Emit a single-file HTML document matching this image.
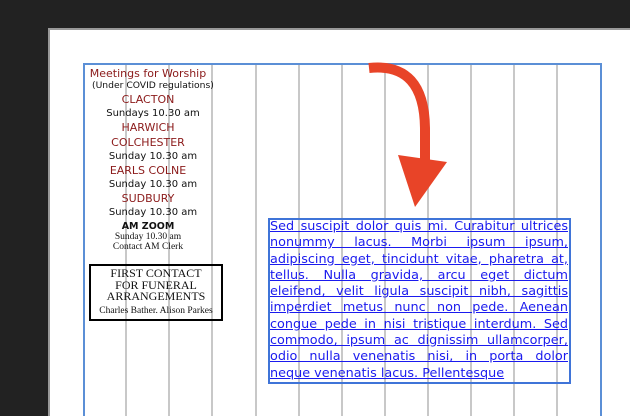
<!DOCTYPE html>
<html><head><style>
html,body{margin:0;width:630px;height:416px;overflow:hidden}
body{background:#222;position:relative;font-family:"DejaVu Sans",sans-serif}
.page{position:absolute;left:48px;top:28px;width:580px;height:386px;background:#fff;border-left:2px solid #999;border-top:2px solid #999;border-right:2px solid #fff}
.frame{position:absolute;left:83px;top:63px;width:515px;height:353px;border:2px solid #5b8fd6;border-bottom:none}
.vl{position:absolute;top:65px;height:351px;width:2px;background:#c8c8c8}
.t{position:absolute;left:88px;width:120px;text-align:center;white-space:nowrap;line-height:12px}
.r{color:#8b1a1a;font-size:11px}
.k{color:#111;font-size:10px}
.s{font-family:"Liberation Serif",serif;font-size:9.5px;color:#111}
.box{position:absolute;left:89px;top:264px;width:130px;height:53px;border:2px solid #000;font-family:"Liberation Serif",serif;text-align:center;font-size:12px;line-height:11.5px;color:#111}
.tb{position:absolute;left:268px;top:218px;width:299px;height:162px;border:2px solid #3f74d8}
.tx{position:absolute;left:270px;top:219px;width:298px;font-size:12.8px;line-height:16.3px;color:#1a1aee;text-decoration:underline}
.tx div{text-align:justify;text-align-last:justify;white-space:nowrap}
.tx div.l{text-align-last:left}
</style></head><body>
<div class="page"></div>
<div class="frame"></div>
<div class="vl" style="left:125px"></div><div class="vl" style="left:168px"></div><div class="vl" style="left:211px"></div><div class="vl" style="left:255px"></div><div class="vl" style="left:298px"></div><div class="vl" style="left:341px"></div><div class="vl" style="left:384px"></div><div class="vl" style="left:427px"></div><div class="vl" style="left:470px"></div><div class="vl" style="left:513px"></div><div class="vl" style="left:556px"></div>
<div class="t r" style="top:68px">Meetings for Worship</div>
<div class="t k" style="top:80px;left:92px;font-size:9.2px">(Under COVID regulations)</div>
<div class="t r" style="top:94px">CLACTON</div>
<div class="t k" style="top:108px;left:93px">Sundays 10.30 am</div>
<div class="t r" style="top:122px">HARWICH</div>
<div class="t r" style="top:137px">COLCHESTER</div>
<div class="t k" style="top:151px;left:93px">Sunday 10.30 am</div>
<div class="t r" style="top:165px">EARLS COLNE</div>
<div class="t k" style="top:179px;left:93px">Sunday 10.30 am</div>
<div class="t r" style="top:193px">SUDBURY</div>
<div class="t k" style="top:207px;left:93px">Sunday 10.30 am</div>
<div class="t k" style="top:221px;font-weight:bold;font-size:9.5px">AM ZOOM</div>
<div class="t s" style="top:231px">Sunday 10.30 am</div>
<div class="t s" style="top:241px">Contact AM Clerk</div>
<div class="box"><div style="margin-top:2px">FIRST CONTACT</div><div>FOR FUNERAL</div><div>ARRANGEMENTS</div><div style="font-size:9.5px;margin-top:3px">Charles Bather. Alison Parkes</div></div>
<div class="tb"></div>
<div class="tx">
<div>Sed suscipit dolor quis mi. Curabitur ultrices</div>
<div>nonummy lacus. Morbi ipsum ipsum,</div>
<div>adipiscing eget, tincidunt vitae, pharetra at,</div>
<div>tellus. Nulla gravida, arcu eget dictum</div>
<div>eleifend, velit ligula suscipit nibh, sagittis</div>
<div>imperdiet metus nunc non pede. Aenean</div>
<div>congue pede in nisi tristique interdum. Sed</div>
<div>commodo, ipsum ac dignissim ullamcorper,</div>
<div>odio nulla venenatis nisi, in porta dolor</div>
<div class="l">neque venenatis lacus. Pellentesque</div>
</div>
<svg style="position:absolute;left:0;top:0" width="630" height="416">
<path d="M369 68 Q425 62 425 130 L425 160" fill="none" stroke="#e84428" stroke-width="10"/>
<polygon points="398,155 447,162 415,207" fill="#e84428"/>
</svg>
</body></html>
